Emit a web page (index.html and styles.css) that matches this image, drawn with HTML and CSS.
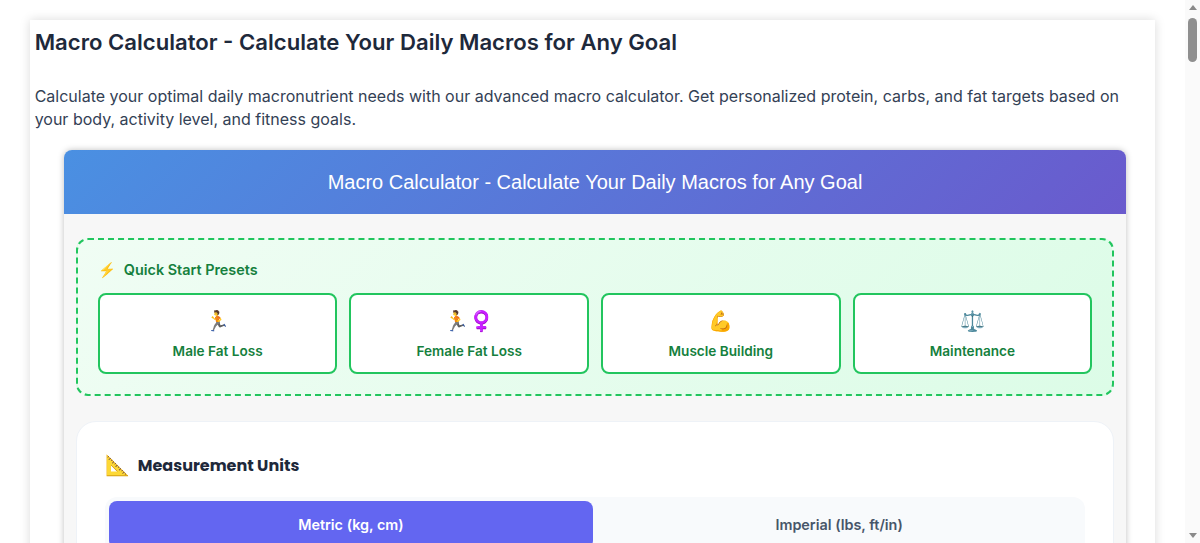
FILE: index.html
```html
<!DOCTYPE html>
<html lang="en">
<head>
    <meta charset="UTF-8">
    <meta name="viewport" content="width=device-width, initial-scale=1.0">
    <title>Macro Calculator</title>
    <link rel="stylesheet" href="styles.css">
</head>
<body>
    <div class="page">
        <h1>Macro Calculator - Calculate Your Daily Macros for Any Goal</h1>
        <p class="intro">Calculate your optimal daily macronutrient needs with our advanced macro calculator. Get personalized protein, carbs, and fat targets based on your body, activity level, and fitness goals.</p>

        <div class="calculator">
            <div class="calculator-header">Macro Calculator - Calculate Your Daily Macros for Any Goal</div>
            <div class="calculator-body">
                <div class="presets">
                    <div class="presets-title"><span class="presets-icon">⚡</span>Quick Start Presets</div>
                    <div class="presets-grid">
                        <button class="preset"><span class="preset-icon">🏃</span>Male Fat Loss</button>
                        <button class="preset"><span class="preset-icon">🏃♀️</span>Female Fat Loss</button>
                        <button class="preset"><span class="preset-icon">💪</span>Muscle Building</button>
                        <button class="preset"><span class="preset-icon">⚖️</span>Maintenance</button>
                    </div>
                </div>

                <div class="section">
                    <h2 class="section-title"><span class="section-icon">📐</span>Measurement Units</h2>
                    <div class="tabs">
                        <button class="tab active">Metric (kg, cm)</button>
                        <button class="tab">Imperial (lbs, ft/in)</button>
                    </div>
                </div>
            </div>
        </div>
    </div>

    <!-- scrollbar of the window, headless browser does not paint one -->
    <div class="scrollbar">
        <span class="arrow-up"></span>
        <span class="thumb"></span>
        <span class="arrow-down"></span>
    </div>
</body>
</html>
```

FILE: styles.css
```css
* {
    box-sizing: border-box;
}

body {
    margin: 0;
    padding: 20px 15px 0 0;
    background: #fff;
    font-family: Inter, "Noto Sans", sans-serif;
    color: #1e293b;
}

.page {
    width: 95%;
    margin: 0 auto;
    padding: 5px 5px 30px;
    background: #fff;
    box-shadow: 0 0 10px rgba(0, 0, 0, 0.15);
}

h1 {
    margin: 0 0 26px;
    font-size: 22.14px;
    line-height: 34px;
    font-weight: 600;
    color: #1e293b;
}

.intro {
    margin: 0 0 19px;
    font-size: 16px;
    line-height: 23px;
    color: #334155;
}

.calculator {
    width: 1062.4px;
    margin-left: 29.2px;
    border-radius: 8px;
    background: #f7f7f7;
    box-shadow: 0 0 6px rgba(0, 0, 0, 0.25);
}

.calculator-header {
    height: 64px;
    line-height: 64px;
    text-align: center;
    font-family: "Liberation Sans", Arial, sans-serif;
    font-size: 20px;
    color: #fff;
    border-radius: 8px 8px 0 0;
    background: linear-gradient(135deg, #4a90e2, #6a5acd);
}

.calculator-body {
    padding: 24px 12px;
}

.presets {
    padding: 20px;
    border: 2px dashed #22c55e;
    border-radius: 12px;
    background: linear-gradient(135deg, #f0fdf4, #dcfce7);
}

.presets-title {
    margin-bottom: 13px;
    font-size: 14.4px;
    line-height: 20px;
    font-weight: 600;
    color: #15803d;
}

.presets-icon {
    margin-right: 8px;
}

.presets-grid {
    display: grid;
    grid-template-columns: repeat(4, 1fr);
    gap: 12px;
}

.preset {
    height: 81px;
    padding: 12px 12px 14px;
    border: 2px solid #22c55e;
    border-radius: 8px;
    background: #fff;
    font-family: Inter, "Noto Sans", sans-serif;
    font-size: 13.6px;
    font-weight: 600;
    color: #15803d;
}

.preset-icon {
    display: block;
    margin-bottom: 8px;
    font-size: 20px;
    line-height: 28px;
}

.section {
    margin-top: 25px;
    padding: 28px;
    border: 1px solid #eef2f7;
    border-radius: 20px;
    background: #fff;
}

.section-title {
    display: flex;
    align-items: center;
    margin: 0 0 15px;
    font-family: Poppins, Inter, sans-serif;
    font-size: 16px;
    line-height: 32px;
    font-weight: 700;
    color: #1e293b;
}

.section-icon {
    margin: 0 8px 3px 0;
    font-size: 20px;
    line-height: 24px;
}

.tabs {
    display: flex;
    gap: 4px;
    padding: 4px;
    border-radius: 12px;
    background: #f8fafc;
}

.tab {
    flex: 1;
    height: 48px;
    padding: 0 0 2px;
    border: none;
    border-radius: 8px;
    background: transparent;
    font-family: Inter, "Noto Sans", sans-serif;
    font-size: 14.4px;
    font-weight: 600;
    color: #475569;
}

.tab.active {
    background: #6366f1;
    color: #fff;
}

.scrollbar {
    position: fixed;
    top: 0;
    right: 0;
    bottom: 0;
    width: 15px;
    padding: 5px 0;
    display: flex;
    flex-direction: column;
    align-items: center;
    background: #fafafa;
}

.arrow-up,
.arrow-down {
    width: 0;
    height: 0;
    border-left: 4.5px solid transparent;
    border-right: 4.5px solid transparent;
}

.arrow-up {
    border-bottom: 5px solid #8a8a8a;
}

.arrow-down {
    margin-top: auto;
    border-top: 5px solid #8a8a8a;
}

.thumb {
    width: 9px;
    height: 44px;
    margin-top: 8px;
    border-radius: 5px;
    background: #8f8f8f;
}
```
